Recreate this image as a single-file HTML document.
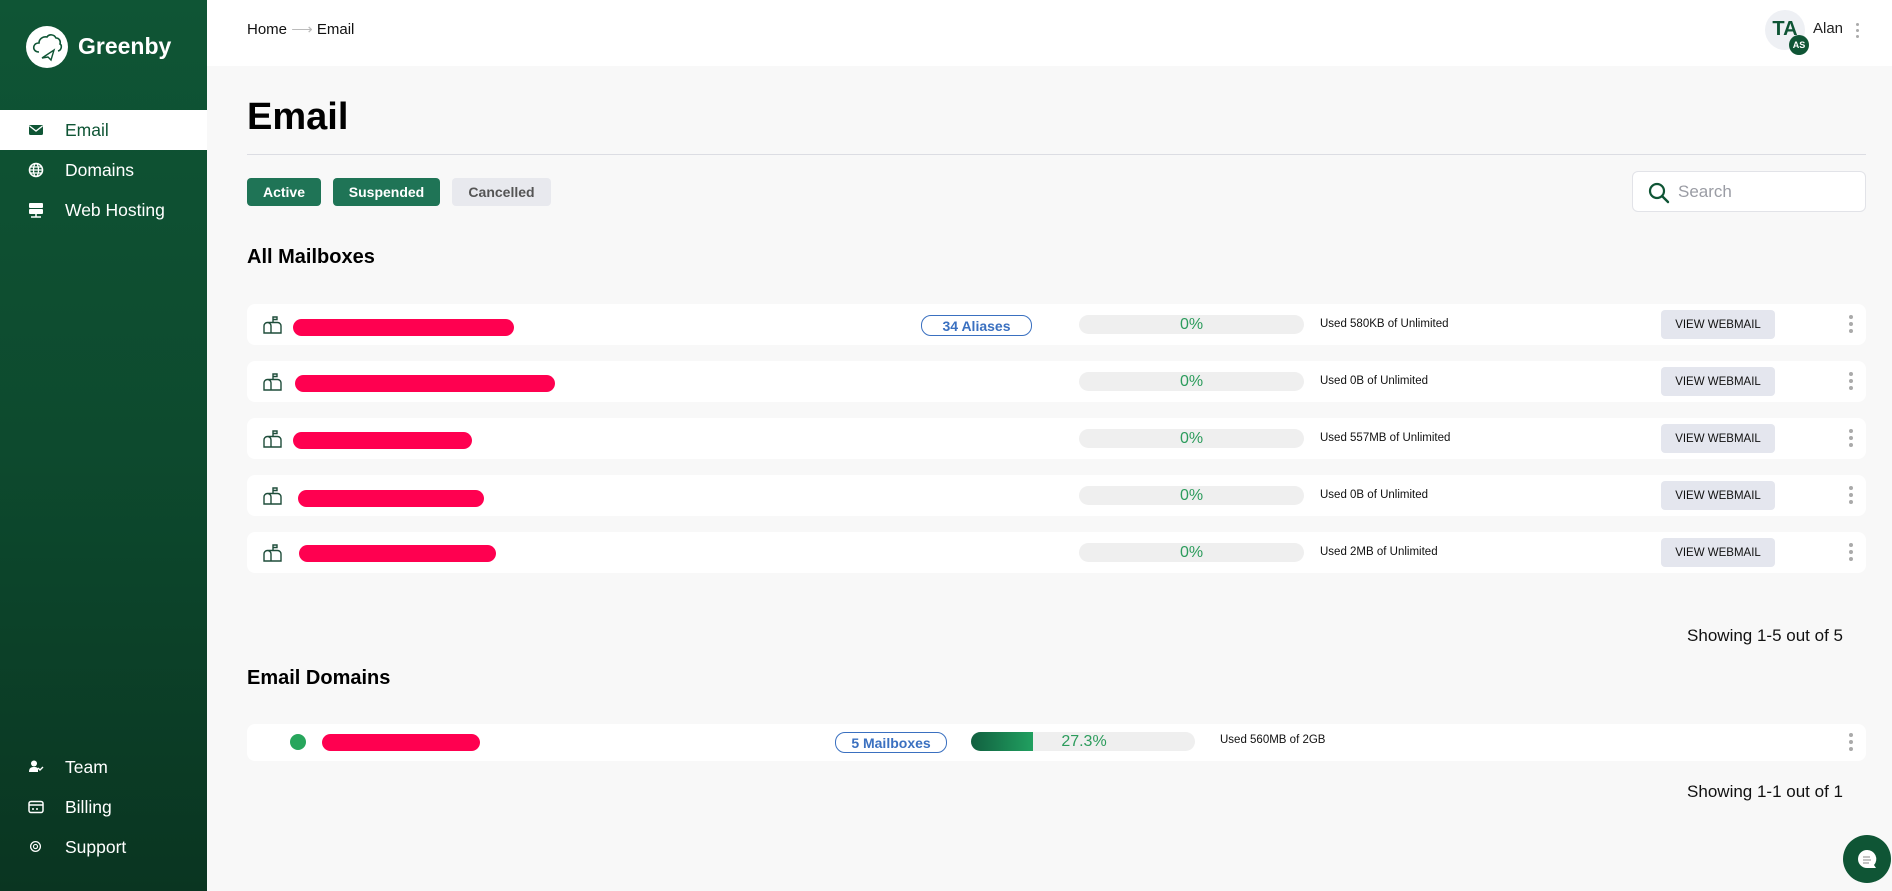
<!DOCTYPE html>
<html><head><meta charset="utf-8"><style>
*{box-sizing:border-box;margin:0;padding:0}
body{width:1892px;height:891px;overflow:hidden;background:#f8f8f8;font-family:"Liberation Sans",sans-serif;position:relative;color:#111}
.abs{position:absolute}
#side{left:0;top:0;width:207px;height:891px;background:linear-gradient(180deg,#0f5535 0%,#0d4a2e 50%,#0a3521 100%)}
.nav{position:absolute;left:0;width:207px;height:40px;color:#fff;font-size:17.5px;line-height:40px;padding-left:65px}
.nav .ic{position:absolute;left:28px;top:12px;width:16px;height:16px}
.nav .ic svg{width:16px;height:16px;display:block}
#top{left:207px;top:0;width:1685px;height:66px;background:#fff}
.tab{position:absolute;top:178px;height:28px;border-radius:4px;font-size:14px;font-weight:bold;display:flex;align-items:center;justify-content:center}
.row{position:absolute;left:247px;width:1619px;height:41px;background:#fff;border-radius:8px}
.red{position:absolute;height:17px;background:#ff0050;border-radius:9px}
.pill{position:absolute;border:1px solid #3a70c0;color:#3a70c0;border-radius:10px;font-size:14px;font-weight:bold;display:flex;align-items:center;justify-content:center;height:21px}
.bar{position:absolute;height:19px;background:#efefef;border-radius:10px;color:#2c9c5c;font-size:16px;display:flex;align-items:center;justify-content:center;overflow:hidden}
.used{position:absolute;font-size:11.5px;color:#111}
.vw{position:absolute;width:114px;height:29px;background:#e4e6ee;border-radius:4px;font-size:11.5px;display:flex;align-items:center;justify-content:center;color:#111}
.dots{position:absolute;width:4px}
.dots i{display:block;width:4px;height:4px;border-radius:50%;background:#aaa;margin-bottom:3px}
</style></head><body>
<div id="side" class="abs">
 <div class="abs" style="left:26px;top:26px;width:42px;height:42px;border-radius:50%;background:#fff">
  <svg width="42" height="42" viewBox="0 0 42 42"><path d="M13 26c-4 0-6-3-5-6 1-3 4-3 5-3 0-4 4-7 8-6 2-3 7-3 9 1 3 0 5 3 4 6 2 1 2 6-2 7" fill="none" stroke="#0f5535" stroke-width="1.6"/><path d="M16 32l12-8-3 10-3-3z" fill="none" stroke="#0f5535" stroke-width="1.4"/></svg>
 </div>
 <div class="abs" style="left:78px;top:33px;color:#fff;font-size:23px;font-weight:bold">Greenby</div>
 <div class="nav" style="top:110px;background:#fff;color:#0f5535"><span class="ic"><svg viewBox="0 0 16 16"><rect x="1" y="3" width="14" height="10" rx="1.5" fill="#0f5535"/><path d="M1.5 4l6.5 5 6.5-5" stroke="#fff" stroke-width="1.3" fill="none"/></svg></span>Email</div>
 <div class="nav" style="top:150px"><span class="ic"><svg viewBox="0 0 16 16"><circle cx="8" cy="8" r="6.5" fill="none" stroke="#fff" stroke-width="1.6"/><ellipse cx="8" cy="8" rx="2.5" ry="6.5" fill="none" stroke="#fff" stroke-width="1.3"/><path d="M1.5 8h13M2.5 5h11M2.5 11h11" stroke="#fff" stroke-width="1.2"/></svg></span>Domains</div>
 <div class="nav" style="top:190px"><span class="ic"><svg viewBox="0 0 16 16"><rect x="1" y="1" width="14" height="5" rx="1" fill="#fff"/><rect x="1" y="7" width="14" height="5" rx="1" fill="#fff"/><path d="M8 12v3M3 15h10" stroke="#fff" stroke-width="1.5"/></svg></span>Web Hosting</div>
 <div class="nav" style="top:747px"><span class="ic"><svg viewBox="0 0 16 16"><circle cx="6" cy="4.5" r="3" fill="#fff"/><path d="M1 13c0-4 2-5 5-5s4 1 4 2v3z" fill="#fff"/><path d="M10 9l2 2 3-3" stroke="#fff" stroke-width="1.4" fill="none"/></svg></span>Team</div>
 <div class="nav" style="top:787px"><span class="ic"><svg viewBox="0 0 16 16"><rect x="1" y="2.5" width="14" height="11" rx="2" fill="none" stroke="#fff" stroke-width="1.5"/><path d="M1 6h14M4 10h2M8 10h2" stroke="#fff" stroke-width="1.4"/></svg></span>Billing</div>
 <div class="nav" style="top:827px"><span class="ic"><svg viewBox="0 0 16 16" style="width:13px;height:13px;margin:1px"><circle cx="8" cy="8" r="6" fill="none" stroke="#fff" stroke-width="1.6"/><circle cx="8" cy="8" r="2.5" fill="none" stroke="#fff" stroke-width="1.4"/></svg></span>Support</div>
</div>
<div id="top" class="abs"></div>
<div class="abs" style="left:247px;top:20px;font-size:15px;color:#111">Home <span style="color:#bbb">⟶</span> Email</div>
<div class="abs" style="left:1765px;top:10px;width:40px;height:40px;border-radius:50%;background:#eef0f4;color:#0f5535;font-weight:bold;font-size:20px;text-align:center;line-height:38px">TA</div>
<div class="abs" style="left:1789px;top:35px;width:20px;height:20px;border-radius:50%;background:#0f5535;color:#fff;font-size:9px;font-weight:bold;text-align:center;line-height:20px">AS</div>
<div class="abs" style="left:1813px;top:20px;font-size:15px;color:#222">Alan</div>
<div class="dots" style="left:1856px;top:23px"><i style="width:3px;height:3px;margin-bottom:3px"></i><i style="width:3px;height:3px;margin-bottom:3px"></i><i style="width:3px;height:3px"></i></div>

<div class="abs" style="left:247px;top:96px;font-size:38px;font-weight:bold;color:#000">Email</div>
<div class="abs" style="left:247px;top:154px;width:1619px;height:1px;background:#dcdde3"></div>
<div class="tab" style="left:247px;width:74px;background:#1f7456;color:#fff">Active</div>
<div class="tab" style="left:333px;width:107px;background:#1f7456;color:#fff">Suspended</div>
<div class="tab" style="left:452px;width:99px;background:#e8e9ee;color:#555">Cancelled</div>
<div class="abs" style="left:1632px;top:171px;width:234px;height:41px;background:#fff;border:1px solid #e2e3e8;border-radius:6px">
 <svg class="abs" style="left:15px;top:10px" width="22" height="22" viewBox="0 0 22 22"><circle cx="9" cy="9" r="7" fill="none" stroke="#0f5535" stroke-width="2.2"/><path d="M14 14l6 6" stroke="#0f5535" stroke-width="2.4" stroke-linecap="round"/></svg>
 <div class="abs" style="left:45px;top:10px;font-size:17px;color:#9a9ca4">Search</div>
</div>
<div class="abs" style="left:247px;top:246px;font-size:20px;font-weight:bold;color:#000">All Mailboxes</div>

<div class="row" style="top:304px"></div>
<div class="row" style="top:361px"></div>
<div class="row" style="top:418px"></div>
<div class="row" style="top:475px"></div>
<div class="row" style="top:532px"></div>

<svg class="abs" style="left:263px;top:315px" width="20" height="20" viewBox="0 0 20 20"><path d="M1 18V11a3.5 3.5 0 017 0v7zM4.5 7.5h10a3.5 3.5 0 013.5 3.5v7H8M10 7.5V2h4v2.5h-4" fill="none" stroke="#1e4d3a" stroke-width="1.4"/></svg>
<svg class="abs" style="left:263px;top:372px" width="20" height="20" viewBox="0 0 20 20"><path d="M1 18V11a3.5 3.5 0 017 0v7zM4.5 7.5h10a3.5 3.5 0 013.5 3.5v7H8M10 7.5V2h4v2.5h-4" fill="none" stroke="#1e4d3a" stroke-width="1.4"/></svg>
<svg class="abs" style="left:263px;top:429px" width="20" height="20" viewBox="0 0 20 20"><path d="M1 18V11a3.5 3.5 0 017 0v7zM4.5 7.5h10a3.5 3.5 0 013.5 3.5v7H8M10 7.5V2h4v2.5h-4" fill="none" stroke="#1e4d3a" stroke-width="1.4"/></svg>
<svg class="abs" style="left:263px;top:486px" width="20" height="20" viewBox="0 0 20 20"><path d="M1 18V11a3.5 3.5 0 017 0v7zM4.5 7.5h10a3.5 3.5 0 013.5 3.5v7H8M10 7.5V2h4v2.5h-4" fill="none" stroke="#1e4d3a" stroke-width="1.4"/></svg>
<svg class="abs" style="left:263px;top:543px" width="20" height="20" viewBox="0 0 20 20"><path d="M1 18V11a3.5 3.5 0 017 0v7zM4.5 7.5h10a3.5 3.5 0 013.5 3.5v7H8M10 7.5V2h4v2.5h-4" fill="none" stroke="#1e4d3a" stroke-width="1.4"/></svg>

<div class="red" style="left:293px;top:319px;width:221px"></div>
<div class="red" style="left:295px;top:375px;width:260px"></div>
<div class="red" style="left:293px;top:432px;width:179px"></div>
<div class="red" style="left:298px;top:490px;width:186px"></div>
<div class="red" style="left:299px;top:545px;width:197px"></div>

<div class="pill" style="left:921px;top:315px;width:111px">34 Aliases</div>

<div class="bar" style="left:1079px;top:315px;width:225px">0%</div>
<div class="bar" style="left:1079px;top:372px;width:225px">0%</div>
<div class="bar" style="left:1079px;top:429px;width:225px">0%</div>
<div class="bar" style="left:1079px;top:486px;width:225px">0%</div>
<div class="bar" style="left:1079px;top:543px;width:225px">0%</div>

<div class="used" style="left:1320px;top:318px">Used 580KB of Unlimited</div>
<div class="used" style="left:1320px;top:375px">Used 0B of Unlimited</div>
<div class="used" style="left:1320px;top:432px">Used 557MB of Unlimited</div>
<div class="used" style="left:1320px;top:489px">Used 0B of Unlimited</div>
<div class="used" style="left:1320px;top:546px">Used 2MB of Unlimited</div>

<div class="vw" style="left:1661px;top:310px">VIEW WEBMAIL</div>
<div class="vw" style="left:1661px;top:367px">VIEW WEBMAIL</div>
<div class="vw" style="left:1661px;top:424px">VIEW WEBMAIL</div>
<div class="vw" style="left:1661px;top:481px">VIEW WEBMAIL</div>
<div class="vw" style="left:1661px;top:538px">VIEW WEBMAIL</div>

<div class="dots" style="left:1849px;top:315px"><i></i><i></i><i></i></div>
<div class="dots" style="left:1849px;top:372px"><i></i><i></i><i></i></div>
<div class="dots" style="left:1849px;top:429px"><i></i><i></i><i></i></div>
<div class="dots" style="left:1849px;top:486px"><i></i><i></i><i></i></div>
<div class="dots" style="left:1849px;top:543px"><i></i><i></i><i></i></div>

<div class="abs" style="right:49px;top:626px;font-size:17px;color:#111">Showing 1-5 out of 5</div>
<div class="abs" style="left:247px;top:667px;font-size:20px;font-weight:bold;color:#000">Email Domains</div>

<div class="row" style="top:724px;height:37px"></div>
<div class="abs" style="left:290px;top:734px;width:16px;height:16px;border-radius:50%;background:#27a65c"></div>
<div class="red" style="left:322px;top:734px;width:158px"></div>
<div class="pill" style="left:835px;top:732px;width:112px">5 Mailboxes</div>
<div class="bar" style="left:971px;top:732px;width:224px;justify-content:flex-start">
 <div style="width:62px;height:100%;background:linear-gradient(90deg,#116040,#21a060)"></div>
 <div style="flex:1;text-align:center;padding-right:60px">27.3%</div>
</div>
<div class="used" style="left:1220px;top:734px">Used 560MB of 2GB</div>
<div class="dots" style="left:1849px;top:733px"><i></i><i></i><i></i></div>
<div class="abs" style="right:49px;top:782px;font-size:17px;color:#111">Showing 1-1 out of 1</div>

<div class="abs" style="left:1843px;top:835px;width:48px;height:48px;border-radius:50%;background:#0f5535">
 <svg class="abs" style="left:13px;top:13px" width="22" height="22" viewBox="0 0 22 22"><path d="M11 2a9 9 0 100 18h9l-2-3a9 9 0 00-7-15z" fill="#fff"/><path d="M7 9h7M7 12h8M7 15h6" stroke="#888" stroke-width="1"/></svg>
</div>
</body></html>
